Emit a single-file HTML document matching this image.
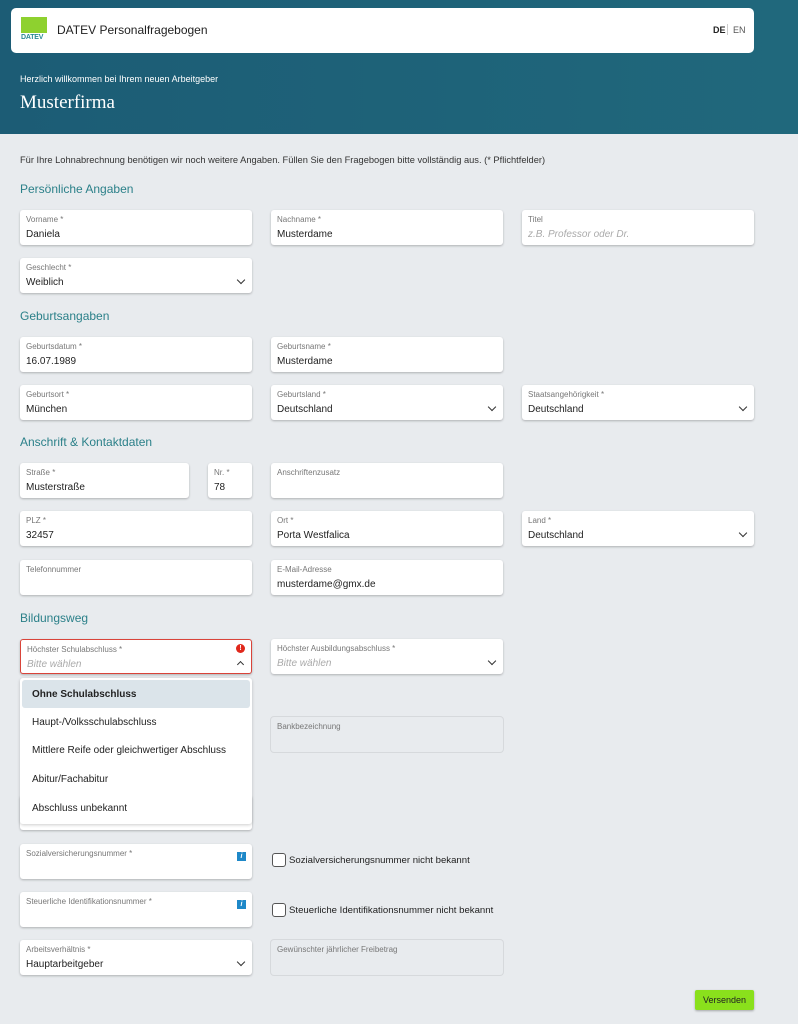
<!DOCTYPE html><html><head><meta charset="utf-8"><style>
*{box-sizing:border-box;margin:0;padding:0}
body{width:798px;height:1024px;background:#e8ebee;font-family:"Liberation Sans",sans-serif;position:relative;overflow:hidden;color:#222}
.ban{position:absolute;left:0;top:0;width:798px;height:134px;background:linear-gradient(90deg,#1c5c75,#20687c)}
.hb{position:absolute;left:11px;top:8px;width:743px;height:45px;background:#fff;border-radius:5px}
.a{position:absolute}
.f{position:absolute;height:35px;background:#fff;border-radius:3px;box-shadow:0 1px 2px rgba(0,0,0,.25)}
.f .l{position:absolute;left:6px;top:5px;font-size:8px;color:#777}
.f .v{position:absolute;left:6px;top:19px;font-size:10px;color:#222}
.f .p{position:absolute;left:6px;top:19px;font-size:10px;color:#aaa;font-style:italic}
.dis{background:#e8ebee;box-shadow:0 0 0 1px #d6d9dc}
.h{position:absolute;left:20px;font-size:12px;color:#2b8089}
.ch{position:absolute;right:8px;top:19px;width:6px;height:6px;border-right:1.5px solid #333;border-bottom:1.5px solid #333;transform:rotate(45deg)}
.cb{position:absolute;width:14px;height:14px;border:1.5px solid #555;border-radius:3px;background:#fff}
.ct{position:absolute;font-size:9.6px;color:#222}
.i{position:absolute;right:6px;top:8px;width:9px;height:9px;background:#1e88c8;color:#fff;font-size:7px;text-align:center;line-height:9px;font-weight:bold}
.o{position:absolute;left:12px;font-size:10px;color:#222}
</style></head><body>
<div class="ban"></div>
<div class="hb">
<div class="a" style="left:10px;top:9px;width:26px;height:16px;background:#8ed12f"></div>
<div class="a" style="left:10px;top:26px;font-size:7px;color:#2a8a94;font-weight:bold;letter-spacing:-.2px">DATEV</div>
<div class="a" style="left:46px;top:15px;font-size:12px;color:#222">DATEV Personalfragebogen</div>
<div class="a" style="left:702px;top:17px;font-size:9px;color:#222;font-weight:bold">DE</div>
<div class="a" style="left:716px;top:16px;width:1px;height:11px;background:#ccc"></div>
<div class="a" style="left:722px;top:17px;font-size:9px;color:#555">EN</div>
</div>
<div class="a" style="left:20px;top:74px;font-size:9px;color:#fff">Herzlich willkommen bei Ihrem neuen Arbeitgeber</div>
<div class="a" style="left:20px;top:92px;font-size:19px;color:#fff;font-family:'Liberation Serif',serif">Musterfirma</div>
<div class="a" style="left:20px;top:155px;font-size:9.3px;color:#333">Für Ihre Lohnabrechnung benötigen wir noch weitere Angaben. Füllen Sie den Fragebogen bitte vollständig aus. (* Pflichtfelder)</div>

<div class="h" style="top:182px">Persönliche Angaben</div>
<div class="f" style="left:20px;top:210px;width:232px"><span class="l">Vorname *</span><span class="v">Daniela</span></div>
<div class="f" style="left:271px;top:210px;width:232px"><span class="l">Nachname *</span><span class="v">Musterdame</span></div>
<div class="f" style="left:522px;top:210px;width:232px"><span class="l">Titel</span><span class="p">z.B. Professor oder Dr.</span></div>
<div class="f" style="left:20px;top:258px;width:232px"><span class="l">Geschlecht *</span><span class="v">Weiblich</span><i class="ch"></i></div>

<div class="h" style="top:309px">Geburtsangaben</div>
<div class="f" style="left:20px;top:337px;width:232px"><span class="l">Geburtsdatum *</span><span class="v">16.07.1989</span></div>
<div class="f" style="left:271px;top:337px;width:232px"><span class="l">Geburtsname *</span><span class="v">Musterdame</span></div>
<div class="f" style="left:20px;top:385px;width:232px"><span class="l">Geburtsort *</span><span class="v">München</span></div>
<div class="f" style="left:271px;top:385px;width:232px"><span class="l">Geburtsland *</span><span class="v">Deutschland</span><i class="ch"></i></div>
<div class="f" style="left:522px;top:385px;width:232px"><span class="l">Staatsangehörigkeit *</span><span class="v">Deutschland</span><i class="ch"></i></div>

<div class="h" style="top:435px">Anschrift &amp; Kontaktdaten</div>
<div class="f" style="left:20px;top:463px;width:169px"><span class="l">Straße *</span><span class="v">Musterstraße</span></div>
<div class="f" style="left:208px;top:463px;width:44px"><span class="l">Nr. *</span><span class="v">78</span></div>
<div class="f" style="left:271px;top:463px;width:232px"><span class="l">Anschriftenzusatz</span></div>
<div class="f" style="left:20px;top:511px;width:232px"><span class="l">PLZ *</span><span class="v">32457</span></div>
<div class="f" style="left:271px;top:511px;width:232px"><span class="l">Ort *</span><span class="v">Porta Westfalica</span></div>
<div class="f" style="left:522px;top:511px;width:232px"><span class="l">Land *</span><span class="v">Deutschland</span><i class="ch"></i></div>
<div class="f" style="left:20px;top:560px;width:232px"><span class="l">Telefonnummer</span></div>
<div class="f" style="left:271px;top:560px;width:232px"><span class="l">E-Mail-Adresse</span><span class="v">musterdame@gmx.de</span></div>

<div class="h" style="top:611px">Bildungsweg</div>
<div class="f" style="left:20px;top:639px;width:232px;border:1.5px solid #d9443a"><span class="l">Höchster Schulabschluss *</span><span class="p">Bitte wählen</span>
<div class="a" style="right:6px;top:4px;width:9px;height:9px;border-radius:50%;background:#e0281c;color:#fff;font-size:7px;text-align:center;line-height:9px;font-weight:bold">!</div>
<div class="a" style="right:8px;top:22px;width:5px;height:5px;border-left:1.5px solid #333;border-top:1.5px solid #333;transform:rotate(45deg)"></div></div>
<div class="f" style="left:271px;top:639px;width:232px"><span class="l">Höchster Ausbildungsabschluss *</span><span class="p">Bitte wählen</span><i class="ch"></i></div>
<div class="f dis" style="left:271px;top:717px;width:232px"><span class="l">Bankbezeichnung</span></div>
<div class="f" style="left:20px;top:795px;width:232px"></div>
<div class="a" style="left:20px;top:678px;width:232px;height:146px;background:#fff;border-radius:3px;box-shadow:0 1px 3px rgba(0,0,0,.2)">
<div class="a" style="left:2px;top:2px;width:228px;height:28px;background:#dbe4ea;border-radius:3px"></div>
<div class="o" style="top:11px;font-weight:bold">Ohne Schulabschluss</div>
<div class="o" style="top:39px">Haupt-/Volksschulabschluss</div>
<div class="o" style="top:67px">Mittlere Reife oder gleichwertiger Abschluss</div>
<div class="o" style="top:96px">Abitur/Fachabitur</div>
<div class="o" style="top:125px">Abschluss unbekannt</div>
</div>
<div class="f" style="left:20px;top:844px;width:232px"><span class="l">Sozialversicherungsnummer *</span><i class="i">i</i></div>
<div class="cb" style="left:272px;top:853px"></div><div class="ct" style="left:289px;top:855px">Sozialversicherungsnummer nicht bekannt</div>
<div class="f" style="left:20px;top:892px;width:232px"><span class="l">Steuerliche Identifikationsnummer *</span><i class="i">i</i></div>
<div class="cb" style="left:272px;top:903px"></div><div class="ct" style="left:289px;top:905px">Steuerliche Identifikationsnummer nicht bekannt</div>
<div class="f" style="left:20px;top:940px;width:232px"><span class="l">Arbeitsverhältnis *</span><span class="v">Hauptarbeitgeber</span><i class="ch"></i></div>
<div class="f dis" style="left:271px;top:940px;width:232px"><span class="l">Gewünschter jährlicher Freibetrag</span></div>
<div class="a" style="left:695px;top:990px;width:59px;height:20px;background:#8ae01c;border-radius:2px;box-shadow:0 1px 2px rgba(0,0,0,.3);font-size:9px;color:#222;text-align:center;line-height:20px">Versenden</div>
</body></html>
